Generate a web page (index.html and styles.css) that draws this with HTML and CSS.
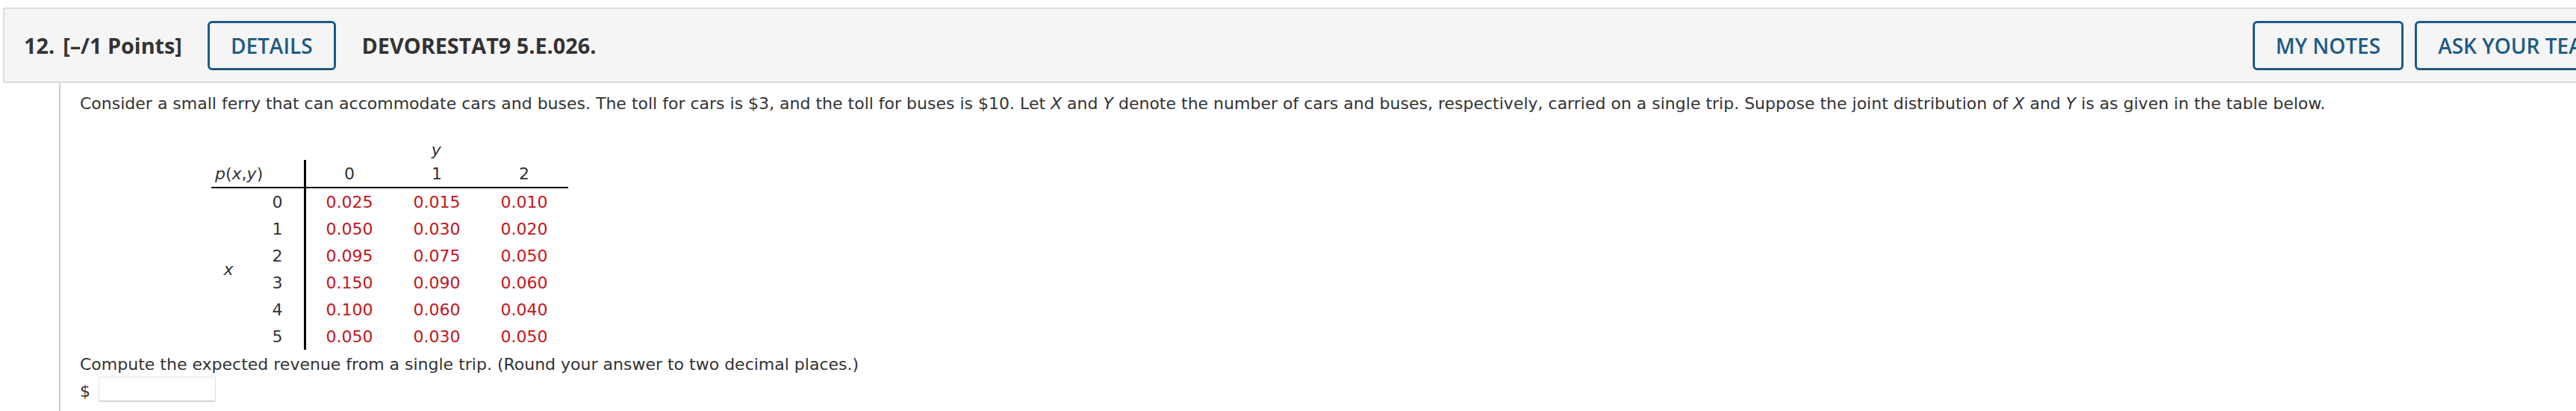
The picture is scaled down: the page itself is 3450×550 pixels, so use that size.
FILE: index.html
```html
<!DOCTYPE html>
<html lang="en">
<head>
<meta charset="utf-8">
<title>Question 12</title>
<link rel="stylesheet" href="styles.css">
</head>
<body>
<div class="question">
  <div class="qhead">
    <span class="qnum">12.</span>
    <span class="pts">[–/1 Points]</span>
    <button class="btn">DETAILS</button>
    <span class="code">DEVORESTAT9 5.E.026.</span>
    <div class="actions">
      <button class="btn">MY NOTES</button>
      <button class="btn">ASK YOUR TEACHER</button>
    </div>
  </div>
  <div class="qbody">
    <p class="intro">Consider a small ferry that can accommodate cars and buses. The toll for cars is $3, and the toll for buses is $10. Let <i>X</i> and <i>Y</i> denote the number of cars and buses, respectively, carried on a single trip. Suppose the joint distribution of <i>X</i> and <i>Y</i> is as given in the table below.</p>
    <table class="dist">
      <tr class="yrow"><td class="ca"></td><td class="cb"></td><td colspan="3" class="ylab"><i>y</i></td></tr>
      <tr class="hrow"><td colspan="2" class="pxy"><i>p</i>(<i>x</i>,<i>y</i>)</td><td class="vc vl">0</td><td class="vc">1</td><td class="vc">2</td></tr>
      <tr class="drow"><td rowspan="6" class="xlab"><i>x</i></td><td class="rl">0</td><td class="v vl">0.025</td><td class="v">0.015</td><td class="v">0.010</td></tr>
      <tr class="drow"><td class="rl">1</td><td class="v vl">0.050</td><td class="v">0.030</td><td class="v">0.020</td></tr>
      <tr class="drow"><td class="rl">2</td><td class="v vl">0.095</td><td class="v">0.075</td><td class="v">0.050</td></tr>
      <tr class="drow"><td class="rl">3</td><td class="v vl">0.150</td><td class="v">0.090</td><td class="v">0.060</td></tr>
      <tr class="drow"><td class="rl">4</td><td class="v vl">0.100</td><td class="v">0.060</td><td class="v">0.040</td></tr>
      <tr class="drow"><td class="rl">5</td><td class="v vl">0.050</td><td class="v">0.030</td><td class="v">0.050</td></tr>
    </table>
    <p class="ask">Compute the expected revenue from a single trip. (Round your answer to two decimal places.)</p>
    <div class="answer"><span class="dollar">$</span><input class="field" type="text" aria-label="answer"></div>
  </div>
</div>
</body>
</html>
```

FILE: styles.css
```css
html, body {
  margin: 0;
  padding: 0;
  overflow: hidden;
  background: #fff;
}

body {
  font-family: "DejaVu Sans", Verdana, sans-serif;
  color: #333;
}

.question {
  width: 3587px;
  margin: 10px 0 0 4px;
}

.qhead {
  display: flex;
  align-items: center;
  height: 97px;
  padding: 0 27px 0 26px;
  background: #f5f5f5;
  border: 2px solid #dcdcdc;
  border-radius: 3px;
  font-family: "Open Sans", sans-serif;
  font-weight: 700;
  font-size: 28.8px;
  color: #333;
}

.qnum {
  margin-right: 11px;
}

.pts {
  margin-right: 34px;
}

.code {
  margin-left: 35px;
}

.actions {
  display: flex;
  gap: 15px;
  margin-left: auto;
}

.btn {
  height: 66px;
  padding: 0 28px;
  border: 3px solid #1d5b84;
  border-radius: 6px;
  background: transparent;
  color: #1d5b84;
  font-family: "Open Sans", sans-serif;
  font-weight: 600;
  font-size: 28px;
  white-space: nowrap;
}

.qbody {
  margin-left: 75px;
  border-left: 2px solid #cfcfcf;
  padding: 12px 0 40px 26px;
  font-size: 22px;
}

.intro {
  margin: 0 0 31px;
  line-height: 32px;
  white-space: nowrap;
}

.dist {
  margin-left: 176px;
  border-collapse: collapse;
  font-size: 22px;
}

.dist td {
  padding: 0;
}

.ca { width: 46px; }
.cb { width: 79px; }

.yrow td {
  height: 28px;
}

.ylab {
  text-align: center;
}

.hrow td {
  height: 36px;
  border-bottom: 2px solid #000;
}

.pxy {
  text-align: left;
  padding-left: 5px !important;
}

.vc {
  width: 117px;
  text-align: center;
}

.vl {
  border-left: 3px solid #000;
}

.drow td {
  height: 36px;
}

.xlab {
  text-align: center;
  vertical-align: middle;
}

.rl {
  text-align: right;
  padding-right: 28px !important;
}

.v {
  text-align: center;
  color: #c4161c;
}

.ask {
  margin: 4px 0 0;
  line-height: 32px;
}

.answer {
  display: flex;
  align-items: center;
  gap: 11px;
  height: 33px;
}

.dollar {
  line-height: 33px;
  position: relative;
  top: 3px;
}

.field {
  box-sizing: border-box;
  width: 157px;
  height: 33px;
  margin: 0;
  border: 1px solid #e2e2e2;
  border-bottom-color: #c8c8c8;
  box-shadow: 0 1px 1px rgba(0, 0, 0, 0.12);
  background: #fff;
  border-radius: 2px;
}
```
